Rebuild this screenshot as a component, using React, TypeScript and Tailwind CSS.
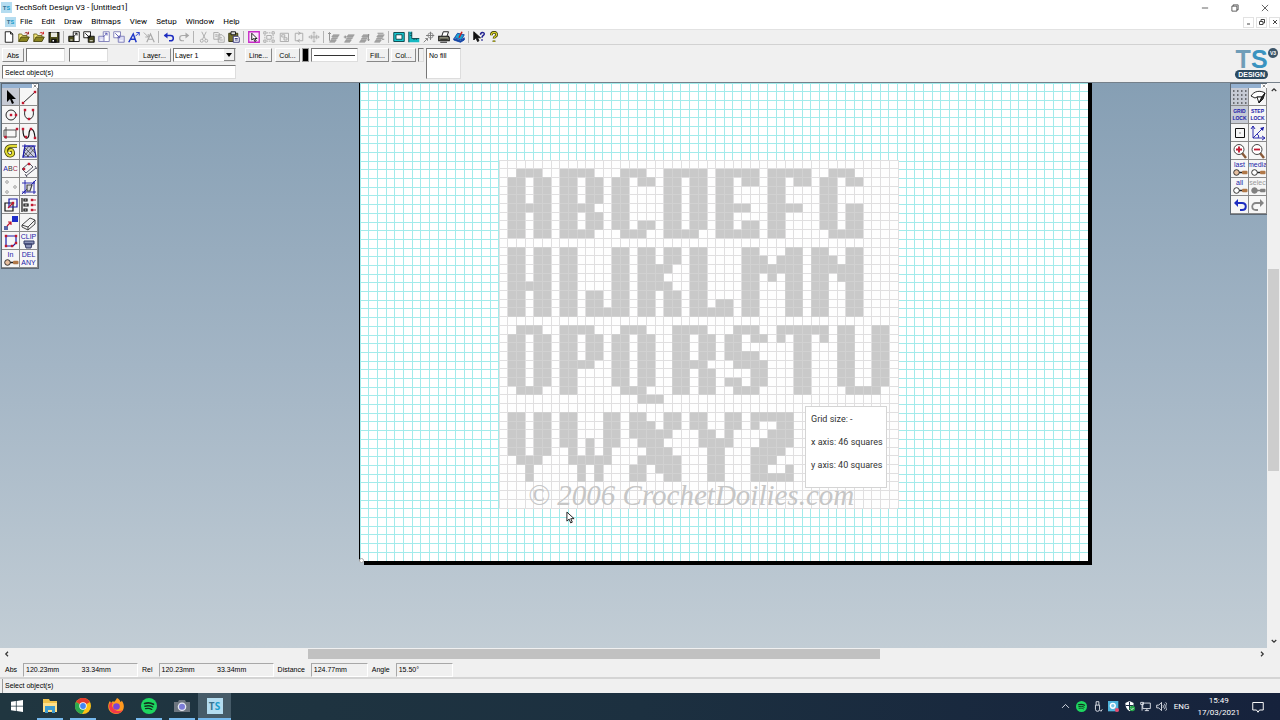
import React from 'react';

const Icon: React.FC<{ size?: string; children: React.ReactNode }> = ({ size = 'w-3 h-3', children }) => (
  <svg viewBox="0 0 16 16" className={`${size} shrink-0`} fill="none" stroke="#111" strokeWidth="1.2">
    {children}
  </svg>
);

type Tool = { label: string; icon: React.ReactNode; active?: boolean };

const NAVY = '#1a1aa8';
const GREY = '#a8a8a8';
const RED = '#c01830';

const dot = (x: number, y: number, fill = RED) => (
  <rect key={`${x}-${y}`} x={x - 1.2} y={y - 1.2} width="2.4" height="2.4" fill={fill} stroke="none" />
);

const folder = (arrow: string) => (
  <Icon>
    <path d="M1 14V4h4l1 2h6v2" fill="#f5e87a" stroke="#6b6420" />
    <path d="M1 14l3-6h11l-3 6z" fill="#8a8420" stroke="#4a4610" />
    <path d="M9 3c2-2 4-1 5 1m0-3v3h-3" stroke={arrow} />
  </Icon>
);

const swapDoc = (disk: boolean, out: boolean) => (
  <Icon>
    <path d={out ? 'M7 1h8v13H7z' : 'M1 1h9v8H1z'} fill="#fff" stroke={disk ? '#111' : '#7d7db8'} />
    <path d={out ? 'M1 7h7v7H1z' : 'M7 7h8v8H7z'} fill={disk ? '#4e4e20' : '#dcdcf4'} stroke={disk ? '#111' : '#7d7db8'} />
    <path d={out ? 'M7 8l5-5m-3 0h3v3' : 'M3 3l6 6m0-3v3H6'} stroke={disk ? '#111' : '#5555b0'} />
    <path d={out ? 'M3 12h3' : 'M9 13h4'} stroke="#fff" />
  </Icon>
);

const layers = (d: string) => (
  <Icon>
    <path d="M7 5h8l-2 3H5zM6 9h7l-2 2H4zM4 12h7l-2 3H2z" fill="#a4a4a4" stroke="#949494" strokeWidth="0.8" />
    <path d={d} stroke="#888" strokeWidth="1.2" />
  </Icon>
);

const toolGroups: Tool[][] = [
  [
    { label: 'New', icon: <Icon><path d="M3 1h7l3 3v11H3zM10 1v3h3" fill="#fff" /></Icon> },
    { label: 'Open', icon: folder('#a02020') },
    { label: 'Insert', icon: folder('#d02020') },
    { label: 'Save', icon: <Icon><path d="M1.500 2h13v13h-13z" fill="#4f4f1c" strokeWidth="1.6" /><path d="M4 2h8v6H4z" fill="#e8e8e0" stroke="none" /><path d="M5 11h6v4H5z" fill="#111" /><path d="M6 12h2v2H6z" fill="#fff" stroke="none" /></Icon> },
  ],
  [
    { label: 'Export drawing', icon: swapDoc(true, true) },
    { label: 'Import drawing', icon: swapDoc(true, false) },
    { label: 'Export bitmap', icon: swapDoc(false, true) },
    { label: 'Import bitmap', icon: swapDoc(false, false) },
    { label: 'Text to front', icon: <Icon><path d="M1 15L7 4l4 11M4 11h6" stroke="#2038c8" strokeWidth="2" /><path d="M10 7l5-5m-4 0h4v4" stroke="#2038c8" /></Icon> },
    { label: 'Text to back', icon: <Icon><path d="M5 15l5-11 5 11M7 11h6" stroke={GREY} strokeWidth="1.6" /><path d="M1 2l6 6m0-4v4H3" stroke={GREY} /></Icon> },
  ],
  [
    { label: 'Undo', icon: <Icon><path d="M2 6h8c5 0 5 7 0 7H8" stroke="#1c2cc0" strokeWidth="2" /><path d="M6 2L1 6l5 4z" fill="#1c2cc0" stroke="none" /></Icon> },
    { label: 'Redo', icon: <Icon><path d="M14 6H6c-5 0-5 7 0 7h2" stroke={GREY} strokeWidth="1.6" /><path d="M10 2l5 4-5 4z" fill={GREY} stroke="none" /></Icon> },
  ],
  [
    { label: 'Cut', icon: <Icon><path d="M5 1l5 10M11 1L6 11" stroke={GREY} /><circle cx="5" cy="13" r="2" stroke={GREY} /><circle cx="11" cy="13" r="2" stroke={GREY} /></Icon> },
    { label: 'Copy', icon: <Icon><path d="M1 2h6l2 2v7H1zM7 5h5l3 3v7H7z" fill="#eee" stroke={GREY} /><path d="M3 5h3M3 7h3M9 9h3M9 12h4" stroke={GREY} /></Icon> },
    { label: 'Paste', icon: <Icon><path d="M1 3h12v11H1z" fill="#77732c" stroke="#33320f" /><path d="M4 1h6v4H4z" fill="#ddd" /><path d="M7 7h6l2 2v6H7z" fill="#fff" stroke="#30307a" /><path d="M9 10h4M9 12h4" stroke="#30307a" /></Icon> },
  ],
  [
    { label: 'Select', icon: <Icon><path d="M1 1h14v14H1z" fill="#fbe6fb" stroke="#c828c8" strokeWidth="1.8" /><path d="M5 3v9l2.500-2 1.500 4 2-1-2-3h3z" fill="#fff" /></Icon> },
    { label: 'Group', icon: <Icon><path d="M1 1h3v3H1zM12 1h3v3h-3zM1 12h3v3H1zM12 12h3v3h-3zM5 6h6v5H5z" stroke={GREY} /><path d="M5 2.500h6M5 13.500h6M2.500 5v6M13.500 5v6" stroke={GREY} strokeDasharray="2 1" /></Icon> },
    { label: 'Ungroup', icon: <Icon><path d="M3 3h11v11H3zM5 5h4v3H5zM8 9h4v3H8z" stroke={GREY} /></Icon> },
    { label: 'Rotate', icon: <Icon><path d="M3 3h10v10H3zM7 1l3 2-3 2M9 11l-3 2 3 2" stroke={GREY} /></Icon> },
    { label: 'Move', icon: <Icon><path d="M8 2v12M2 8h12M6 3l2-2 2 2M6 13l2 2 2-2M3 6L1 8l2 2M13 6l2 2-2 2M5 5v6M11 5v6" stroke={GREY} /></Icon> },
  ],
  [
    { label: 'To front', icon: layers('M2 13V2m-2 2l2-2 2 2') },
    { label: 'Forward', icon: layers('M1 8h4m-2-2v4') },
    { label: 'Backward', icon: layers('M14 4v9m-2-2l2 2 2-2') },
    { label: 'To back', icon: layers('M12 11h3M6 3h8') },
  ],
  [
    { label: 'Page', icon: <Icon><path d="M1 2h14v12H1z" fill="#19c6cf" stroke="#073e44" /><path d="M4 5h8v6H4z" fill="#fff" stroke="#073e44" /></Icon> },
    { label: 'Rulers', icon: <Icon><path d="M1 1h4v9h10v5H1z" fill="#15b9c2" stroke="none" /><path d="M5 1v9h10M1 15V1M3 3h2M3 6h2M8 10v2M11 10v2" stroke="#0a4247" /></Icon> },
    { label: 'Origin', icon: <Icon><circle cx="10" cy="6" r="3.500" stroke="#888" /><path d="M10 1v11M4 6h11M1 15l5-5m-3 0h3v3" stroke="#777" /></Icon> },
    { label: 'Print', icon: <Icon><path d="M5 7l2-6h7l-2 6" fill="#fff" /><path d="M1 7h13l1 2v4H1z" fill="#8b8b78" strokeWidth="1.5" /><path d="M3 11h10M3 15h9" /></Icon> },
    { label: 'Plot', icon: <Icon><path d="M2 9l4-6 9 2-4 7z" fill="#1ba5d5" stroke="#1344a5" /><path d="M1 10l9 3 5-4v3l-5 3-9-3z" fill="#1344a5" stroke="#1344a5" /><path d="M12 1L8 9" stroke="#c82020" strokeWidth="2" /></Icon> },
  ],
  [
    { label: 'Context help', icon: <Icon><path d="M1 1v11l3-3 2 5 2-1-2-4h4z" fill="#111" /><path d="M10 5c0-4 5-4 5-1 0 2-3 2-3 5m0 2v2" stroke="#20208f" strokeWidth="2" /></Icon> },
    { label: 'Help', icon: <Icon><path d="M4.500 5.500c0-5 7-5 7-.5 0 3-3.500 2-3.500 5m0 2.500v2" stroke="#33330a" strokeWidth="3.600" /><path d="M4.500 5.500c0-5 7-5 7-.5 0 3-3.500 2-3.500 5m0 2.500v2" stroke="#d8d327" strokeWidth="1.700" /></Icon> },
  ],
];

const plug = (fill: string, colour: string) => (
  <svg viewBox="0 0 16 7" className="w-4 h-[7px]" stroke={colour}>
    <path d="M7 3.500h3" strokeWidth="1.500" />
    <rect x="10" y="1.700" width="5.500" height="3.600" rx="1" fill={colour === '#222' ? '#b07848' : colour} stroke="none" />
    <circle cx="4.500" cy="3.500" r="2.800" fill={fill} strokeWidth="0.900" />
  </svg>
);

const LockCaption: React.FC<{ word: string }> = ({ word }) => (
  <span className="flex flex-col items-center font-bold text-[5px] leading-[7px] text-[#1a1aa8]">
    <span>{word}</span>
    <span>LOCK</span>
  </span>
);

const PlugCaption: React.FC<{ word: string; fill: string; muted?: boolean }> = ({ word, fill, muted }) => (
  <span className={`flex flex-col items-center text-[7px] leading-[8px] ${muted ? 'text-[#999]' : 'text-[#1a1aa8]'}`}>
    <span>{word}</span>
    {plug(fill, muted ? '#808080' : '#222')}
  </span>
);

const S = 'w-4 h-4';

const drawTools: Tool[] = [
  { label: 'Pointer', active: true, icon: <Icon size={S}><path d="M4 1v12l3-3 2 5 2-1-2-4h4z" fill="#000" stroke="none" /></Icon> },
  { label: 'Line', icon: <Icon size={S}><path d="M2 14L14 3" strokeWidth="0.900" />{dot(2, 14)}{dot(14, 3)}</Icon> },
  { label: 'Circle', icon: <Icon size={S}><circle cx="8" cy="8" r="5" strokeWidth="0.900" />{dot(8, 8)}{dot(13, 8)}</Icon> },
  { label: 'Arc', icon: <Icon size={S}><path d="M4 3c-3 12 11 12 8 0" strokeWidth="0.900" />{dot(4, 3)}{dot(12, 3)}{dot(8, 12)}</Icon> },
  { label: 'Rectangle', icon: <Icon size={S}><path d="M1 5h12v7H1zM3 2v12" stroke="#444" strokeWidth="0.900" />{dot(2.5, 12)}{dot(14, 4)}</Icon> },
  { label: 'Curve', icon: <Icon size={S}><path d="M2 5c0 10 6 10 6 4s5-8 6 4" />{dot(2, 4)}{dot(5, 12)}{dot(10, 4)}{dot(14, 13)}</Icon> },
  { label: 'Contour', icon: <Icon size={S}><path d="M14 3H8C3 3 2 8 4 11s7 2 6-2-4-2-4 0" stroke="#444408" strokeWidth="3.600" /><path d="M14 3H8C3 3 2 8 4 11s7 2 6-2-4-2-4 0" stroke="#e2db34" strokeWidth="2" /></Icon> },
  { label: 'Hatch', icon: <Icon size={S}><path d="M4 3h9l2 11H2z" fill="#c8cbe0" stroke={NAVY} /><path d="M4 5l9 9M3 9l5 5M8 3l6 7M12 3L3 13M13 6l-7 8M8 3L4 8" stroke="#222" strokeWidth="0.600" /><path d="M1 3h14M4 1L2 15" stroke={NAVY} strokeWidth="0.800" /></Icon> },
  { label: 'Text', icon: <span className="text-[7px] leading-none text-[#333]"><span className="text-[#1a1aa8]">A</span>B<span className="text-[#a02848]">C</span></span> },
  { label: 'Dimension', icon: <Icon size={S}><path d="M1 8l7-6 4 4-7 6zM5 15l10-8M4 13l2 3M14 5l2 3" stroke="#445" strokeWidth="0.900" />{dot(3, 8)}{dot(8, 3)}</Icon> },
  { label: 'Points', icon: <Icon size={S}><g stroke="#999" strokeWidth="0.900"><circle cx="4" cy="3" r="1.300" /><circle cx="12" cy="8" r="1.300" /><circle cx="4" cy="13" r="1.300" /></g></Icon> },
  { label: 'Trim', icon: <Icon size={S}><path d="M1 4h13M4 1v14M13 2v13M1 13h14M15 1L1 15" stroke={NAVY} strokeWidth="0.900" /><path d="M6 6h5l-2 6H6z" fill="#ddd" stroke="#444" /></Icon> },
  { label: 'Duplicate', icon: <Icon size={S}><path d="M2 6h8v8H2z" /><path d="M6 2h8v8H6z" stroke={NAVY} /><path d="M5 11l5-5" stroke={RED} />{dot(10, 6)}</Icon> },
  { label: 'Align', icon: <Icon size={S}><path d="M1 1v14M3 2h3v2H3zM3 7h4v2H3zM3 12h3v2H3z" /><path d="M10 3h5M10 8h5M10 13h5" stroke={RED} strokeWidth="0.900" />{dot(11, 3)}{dot(11, 8)}{dot(11, 13)}</Icon> },
  { label: 'Scale', icon: <Icon size={S}><path d="M9 1h6v6H9z" fill="#1c2cc8" stroke="none" /><path d="M1 11h4v4H1z" fill="#5a66a8" stroke="none" /><path d="M4 11l4-4m-3 0h3v3" stroke={RED} /></Icon> },
  { label: 'Erase', icon: <Icon size={S}><path d="M1 10l8-7 5 2v4l-7 6-6-3zM1 10l6 2 7-7M7 12v3" fill="#f2f2f2" stroke="#333" strokeWidth="0.900" /></Icon> },
  { label: 'Edit nodes', icon: <Icon size={S}><path d="M3 3h10v7l-3 3H3z" stroke={NAVY} />{dot(3, 3)}{dot(13, 3)}{dot(13, 10)}{dot(9, 13)}{dot(3, 13)}</Icon> },
  { label: 'Clip', icon: <span className="flex flex-col items-center"><span className="text-[7px] leading-[7px] text-[#1a1aa8]">CLIP</span><svg viewBox="0 0 12 9" className="w-3 h-[9px]"><path d="M1 1h10v3H1zM2 4h7l-1 4H3z" fill="#8c94b8" stroke="#333a66" /></svg></span> },
  { label: 'Plug in', icon: <PlugCaption word="In" fill="#e8c0a0" /> },
  { label: 'Delete any', icon: <span className="flex flex-col items-center text-[7px] leading-[8px] text-[#1a1aa8]"><span>DEL</span><span>ANY</span></span> },
];

const magnifier = (d: string) => (
  <Icon size={S}>
    <path d="M10 10l4 5" stroke="#8a5a38" strokeWidth="2.400" />
    <circle cx="7" cy="6.500" r="5" fill="#fff" stroke="#333" strokeWidth="0.900" />
    <path d={d} stroke={RED} strokeWidth="1.800" />
  </Icon>
);

const viewTools: Tool[] = [
  { label: 'Grid', active: true, icon: <Icon size={S}>{[2, 6, 10, 14].map(y => <path key={y} d={`M1 ${y}h15`} stroke="#111" strokeDasharray="1.500 2.500" />)}</Icon> },
  { label: 'Snap', icon: <Icon size={S}><path d="M1 7c3-5 9-6 14-3l-3 4H7L5 9z" fill="#fff" strokeWidth="0.900" /><path d="M7 8h5l-3 6z" fill="#fff" strokeWidth="0.900" /><path d="M12 8l3-4-2 6-4 4z" fill="#333" strokeWidth="0.900" /></Icon> },
  { label: 'Grid lock', active: true, icon: <LockCaption word="GRID" /> },
  { label: 'Step lock', icon: <LockCaption word="STEP" /> },
  { label: 'Centre', icon: <Icon size={S}><path d="M3.500 3.500h9v9h-9z" strokeWidth="1" /><path d="M7.500 7.500h1v1h-1z" fill="#111" stroke="none" /></Icon> },
  { label: 'Axes', icon: <Icon size={S}><path d="M3 1v12h12M1 4l2-3 2 3M12 11l3 2-3 2M3 13L14 2M7 9c2 1 2 3 1 4" stroke={NAVY} strokeWidth="0.900" /><path d="M10 3l4-1-1 4z" fill={NAVY} stroke="none" /></Icon> },
  { label: 'Zoom in', icon: magnifier('M4 6.500h6M7 3.500v6') },
  { label: 'Zoom out', icon: magnifier('M4 6.500h6') },
  { label: 'Zoom last', icon: <PlugCaption word="last" fill="#e8c0a0" /> },
  { label: 'Zoom media', icon: <PlugCaption word="media" fill="#fff" /> },
  { label: 'Zoom all', icon: <PlugCaption word="all" fill="#fff" /> },
  { label: 'Zoom selection', icon: <PlugCaption word="selec" fill="#808080" muted /> },
  { label: 'Undo view', icon: <Icon size={S}><path d="M4 6h6c5 0 5 7 0 7H8" stroke="#1c2cc0" strokeWidth="2" /><path d="M6 2L2 6l4 4z" fill="#1c2cc0" stroke="none" /></Icon> },
  { label: 'Redo view', icon: <Icon size={S}><path d="M12 6H6c-5 0-5 7 0 7h2" stroke="#858585" strokeWidth="1.800" /><path d="M10 2l4 4-4 4z" fill="#858585" stroke="none" /></Icon> },
];

const Palette: React.FC<{ tools: Tool[]; className: string }> = ({ tools, className }) => (
  <div className={`absolute top-0 border border-[#5c6874] bg-[#8a949c] ${className}`}>
    <div className="h-1 bg-[#93b0d0] flex justify-end">
      <button aria-label="Close palette" className="w-1.5 h-1 bg-white flex items-center justify-center">
        <svg viewBox="0 0 6 6" className="w-1.5 h-1" stroke="#555"><path d="M1 1l4 4M5 1L1 5" /></svg>
      </button>
    </div>
    <div className="grid grid-cols-2">
      {tools.map(tool => (
        <button
          key={tool.label}
          aria-label={tool.label}
          className={`w-[18px] h-[18px] overflow-hidden flex items-center justify-center border-r border-b border-[#8a8a8a] ${tool.active ? 'bg-[#c6cad4]' : 'bg-[#f6f6f6]'}`}
        >
          {tool.icon}
        </button>
      ))}
    </div>
  </div>
);

// Filled squares per chart row, as [first, last] column pairs
const chartRows: Record<number, number[][]> = {
  1: [[2, 4], [7, 10], [14, 16], [19, 23], [25, 29], [31, 35], [38, 40]],
  2: [[1, 2], [4, 5], [7, 8], [10, 11], [13, 14], [16, 17], [19, 20], [22, 23], [25, 26], [28, 29], [31, 32], [34, 35], [37, 38], [40, 41]],
  3: [[1, 2], [4, 5], [7, 8], [10, 11], [13, 14], [19, 20], [22, 23], [25, 26], [31, 32], [37, 38]],
  4: [[1, 2], [4, 5], [7, 8], [10, 11], [13, 14], [19, 20], [22, 23], [25, 26], [31, 32], [37, 38]],
  5: [[1, 5], [7, 10], [13, 14], [19, 20], [22, 23], [25, 28], [31, 34], [37, 38], [40, 41]],
  6: [[1, 2], [4, 5], [7, 8], [10, 11], [13, 14], [19, 20], [22, 23], [25, 26], [31, 32], [37, 38], [40, 41]],
  7: [[1, 2], [4, 5], [7, 8], [10, 11], [13, 14], [16, 17], [19, 20], [22, 23], [25, 26], [28, 29], [31, 32], [37, 38], [40, 41]],
  8: [[1, 2], [4, 5], [7, 10], [14, 16], [19, 22], [25, 29], [31, 32], [38, 41]],
  10: [[1, 2], [4, 5], [7, 8], [13, 14], [16, 17], [19, 20], [22, 23], [28, 29], [33, 34], [36, 37], [40, 41]],
  11: [[1, 2], [4, 5], [7, 8], [13, 14], [16, 17], [19, 20], [22, 23], [28, 30], [32, 34], [36, 38], [40, 41]],
  12: [[1, 2], [4, 5], [7, 8], [13, 14], [16, 19], [22, 23], [28, 34], [36, 41]],
  13: [[1, 2], [4, 5], [7, 8], [13, 14], [16, 18], [22, 23], [28, 29], [31, 31], [33, 34], [36, 37], [39, 41]],
  14: [[1, 5], [7, 8], [13, 14], [16, 19], [22, 23], [28, 29], [33, 34], [36, 37], [40, 41]],
  15: [[1, 2], [4, 5], [7, 8], [10, 11], [13, 14], [16, 17], [19, 20], [22, 23], [28, 29], [33, 34], [36, 37], [40, 41]],
  16: [[1, 2], [4, 5], [7, 8], [10, 11], [13, 14], [16, 17], [19, 20], [22, 23], [25, 26], [28, 29], [33, 34], [36, 37], [40, 41]],
  17: [[1, 2], [4, 5], [7, 8], [10, 14], [16, 17], [19, 20], [22, 26], [28, 29], [33, 34], [36, 37], [40, 41]],
  19: [[2, 4], [7, 10], [14, 16], [20, 23], [27, 29], [32, 37], [39, 40], [43, 44]],
  20: [[1, 2], [4, 5], [7, 8], [10, 11], [13, 14], [16, 17], [20, 21], [23, 24], [26, 27], [29, 30], [32, 32], [34, 35], [37, 37], [39, 40], [43, 44]],
  21: [[1, 2], [4, 5], [7, 8], [10, 11], [13, 14], [16, 17], [20, 21], [23, 24], [26, 27], [34, 35], [39, 40], [43, 44]],
  22: [[1, 2], [4, 5], [7, 8], [10, 11], [13, 14], [16, 17], [20, 21], [23, 24], [26, 29], [34, 35], [39, 40], [43, 44]],
  23: [[1, 2], [4, 5], [7, 10], [13, 14], [16, 17], [20, 23], [27, 30], [34, 35], [39, 40], [43, 44]],
  24: [[1, 2], [4, 5], [7, 8], [13, 14], [16, 17], [20, 21], [23, 24], [29, 30], [34, 35], [39, 40], [43, 44]],
  25: [[1, 2], [4, 5], [7, 8], [13, 14], [16, 17], [20, 21], [23, 24], [26, 27], [29, 30], [34, 35], [39, 40], [43, 44]],
  26: [[2, 4], [7, 8], [14, 16], [20, 21], [23, 24], [27, 29], [34, 35], [40, 43]],
  27: [[16, 18]],
  29: [[1, 2], [4, 5], [7, 8], [12, 13], [15, 16], [19, 20], [22, 23], [26, 27], [29, 33]],
  30: [[1, 2], [4, 5], [7, 8], [12, 13], [15, 17], [19, 20], [22, 23], [26, 27], [29, 29], [32, 33]],
  31: [[1, 2], [4, 5], [7, 8], [12, 13], [15, 19], [23, 24], [26, 26], [31, 33]],
  32: [[1, 2], [4, 5], [7, 8], [10, 10], [12, 13], [16, 18], [23, 26], [30, 33]],
  33: [[1, 2], [4, 5], [8, 8], [10, 10], [12, 12], [17, 19], [24, 25], [29, 32]],
  34: [[2, 4], [8, 12], [16, 20], [24, 25], [29, 31]],
  35: [[3, 3], [9, 9], [11, 11], [15, 16], [18, 20], [24, 25], [29, 30], [33, 33]],
  36: [[3, 3], [9, 9], [11, 11], [15, 16], [19, 20], [24, 25], [29, 33]],
};

const gridPath = (cols: number, rows: number) =>
  Array.from({ length: cols + 1 }, (_, i) => `M${i} 0V${rows}`).join('') +
  Array.from({ length: rows + 1 }, (_, i) => `M0 ${i}H${cols}`).join('');

const cellPath = Object.entries(chartRows)
  .flatMap(([row, runs]) => runs.map(([a, b]) => `M${a} ${row}H${b + 1}v1H${a}z`))
  .join('');

const Chart: React.FC = () => (
  <div className="absolute left-[139px] top-[77px] w-[399px] h-[348px] bg-[#fefefe]">
    <svg viewBox="0 0 46 40" preserveAspectRatio="none" shapeRendering="crispEdges" className="block w-full h-full overflow-visible">
      <path d={gridPath(46, 40)} stroke="#e2dfe2" strokeWidth="1" vectorEffect="non-scaling-stroke" fill="none" />
      <path d={cellPath} fill="#c9c9c9" />
      <path d={gridPath(46, 40)} stroke="#dedede" strokeWidth="1" strokeOpacity="0.4" vectorEffect="non-scaling-stroke" fill="none" />
    </svg>
    <p className="absolute left-[29px] bottom-[-3px] font-['Liberation_Serif',serif] italic text-[29px] leading-8 text-[#c6c6c6] whitespace-nowrap">
      © 2006 CrochetDoilies.com
    </p>
    <div className="absolute left-[306px] top-[246px] w-[82px] h-[82px] pl-[5px] pt-1 bg-white border border-[#d4d4d4] font-[Roboto,sans-serif] text-[9px] text-[#333] whitespace-nowrap flex flex-col">
      <span className="h-[23px] leading-4">Grid size: -</span>
      <span className="h-[23px] leading-4">x axis: 46 squares</span>
      <span className="h-[23px] leading-4">y axis: 40 squares</span>
    </div>
  </div>
);

const Bevel: React.FC<{ label: string; className?: string }> = ({ label, className = '' }) => (
  <button className={`h-[14px] bg-[#f0f0f0] border border-t-white border-l-white border-b-[#888] border-r-[#888] flex items-center justify-center ${className}`}>
    {label}
  </button>
);

const Field: React.FC<{ label: string; values: string[]; className: string }> = ({ label, values, className }) => (
  <div className="flex items-center gap-1.5">
    <span>{label}</span>
    <output aria-label={label} className={`h-[14px] flex items-center pl-0.5 border border-t-[#a8a8a8] border-l-[#a8a8a8] border-b-white border-r-white ${className}`}>
      {values.map(value => <span key={value} className="w-[57px]">{value}</span>)}
    </output>
  </div>
);

const TsBadge: React.FC<{ className: string }> = ({ className }) => (
  <span className={`bg-[#b4dcf0] text-[#39718f] font-bold flex items-center justify-center leading-none ${className}`}>
    T<span className="text-[#1b9ccc]">S</span>
  </span>
);

const Spotify: React.FC<{ className: string }> = ({ className }) => (
  <svg viewBox="0 0 16 16" className={className} fill="none" stroke="#12301f" strokeLinecap="round">
    <circle cx="8" cy="8" r="8" fill="#1ed760" stroke="none" />
    <path d="M3.500 5.500c3-1 6.500-.7 9 .8" strokeWidth="1.600" />
    <path d="M4 8.200c3-.8 5.500-.5 7.800.8" strokeWidth="1.400" />
    <path d="M4.500 10.700c2.300-.6 4.500-.4 6.300.7" strokeWidth="1.200" />
  </svg>
);

const taskbarApps = [
  { label: 'Start', line: '', icon: <svg viewBox="0 0 16 16" className="w-3 h-3" fill="#fff"><path d="M0 2.300l6.500-.9v6.100H0zM7.500 1.200L16 0v7.500H7.500zM0 8.500h6.500v6.100L0 13.700zM7.500 8.500H16V16l-8.500-1.200z" /></svg> },
  { label: 'File Explorer', line: 'w-[26px]', icon: <svg viewBox="0 0 16 16" className="w-4 h-4"><path d="M1 1h6l1 2h7v11H1z" fill="#f0c24c" /><path d="M1 5h14v9H1z" fill="#ffe08a" /><path d="M3 8h10v7h-3v-3H6v3H3z" fill="#3e9bd0" /></svg> },
  { label: 'Chrome', line: 'w-[26px]', icon: <svg viewBox="0 0 16 16" className="w-4 h-4"><circle cx="8" cy="8" r="8" fill="#fbc116" /><path d="M8 8L1 4a8 8 0 0114 0z" fill="#e33b2e" /><path d="M8 8L1 4a8 8 0 006 12l4-6.500z" fill="#2da94f" /><circle cx="8" cy="8" r="3.700" fill="#fff" /><circle cx="8" cy="8" r="2.900" fill="#4286f5" /></svg> },
  { label: 'Firefox', line: '', icon: <svg viewBox="0 0 16 16" className="w-4 h-4"><path d="M9 0c2 1 3 2 3.500 4 1-.2 1-1 1-1.500C16 5 16.500 9 15 12c-3 5.500-11 5-14 0C-.5 9 .3 5 2 3l1 2 2-2 1 1c1-1 2-2 3-4z" fill="#ff9a1f" /><path d="M1 8c0 8 10 10 14 4-4 2-7 1-9-1S3 7 5 5C3 4 1 5 1 8z" fill="#f4384a" /><circle cx="8.500" cy="8.500" r="3.300" fill="#7a45d8" /></svg> },
  { label: 'Spotify', line: 'w-[26px]', icon: <Spotify className="w-4 h-4" /> },
  { label: 'Camera', line: 'w-[26px]', icon: <svg viewBox="0 0 16 16" className="w-4 h-4"><path d="M0 4h4l1-2h6l1 2h4v10H0z" fill="#6d7680" /><circle cx="8" cy="8.700" r="4.300" fill="#e6e9f2" /><circle cx="8" cy="8.700" r="3" fill="#7b7bd6" /></svg> },
  { label: 'TechSoft Design', line: 'w-full', icon: <TsBadge className="w-4 h-4 text-[10px]" /> },
];

const trayIcons = [
  { label: 'Show hidden icons', icon: <path d="M3 10l5-5 5 5" /> },
  { label: 'Spotify', icon: null },
  { label: 'USB', icon: <path d="M5 6h6v6a3 3 0 01-6 0zM6 6V1h4v5M11 13l2 2 2-3" /> },
  { label: 'Recorder', icon: <g stroke="none"><rect width="15" height="15" fill="#4fb4dc" /><circle cx="7" cy="7" r="4.500" fill="#fff" /><circle cx="7" cy="7" r="2.500" fill="#7cc6e6" /><circle cx="13" cy="13" r="3" fill="#e8486c" /></g> },
  { label: 'Security', icon: <g stroke="none"><path d="M8 0l6 3c0 6-2 9-6 12C4 12 2 9 2 3z" fill="#fff" /><path d="M8 1v12M2.500 6.500h11" stroke="#1b2940" strokeWidth="1.500" /><circle cx="12" cy="11" r="4" fill="#25a849" /><path d="M10 11l1.500 1.500L14 10" stroke="#fff" /></g> },
  { label: 'Network', icon: <path d="M4 3h11v8H4zM7 14h6M10 11v3M1 2h4v3H1zM3 5v9" /> },
  { label: 'Volume', icon: <path d="M1 6h3l4-4v12l-4-4H1zM10 6c1 1 1 3 0 4M12 4c2 2 2 6 0 8M14 2c3 3 3 9 0 12" /> },
];

const App: React.FC = () => (
  <div className="h-screen min-h-[400px] flex flex-col overflow-hidden bg-[#f0f0f0] text-black font-['Liberation_Sans',Arial,sans-serif] text-[7px] leading-none">
    {/* Title bar */}
    <header className="h-[15px] shrink-0 bg-white flex items-center font-[Roboto,sans-serif] text-[8px]">
      <TsBadge className="w-[11px] h-[11px] ml-px mr-[3px] text-[6px]" />
      <h1 className="flex-1">TechSoft Design V3 - [Untitled1]</h1>
      <div className="flex">
        {[['Minimise', 'M3 8h10'], ['Restore', 'M3 5h8v8H3zM5 5V3h8v8h-2'], ['Close', 'M3 3l10 10M13 3L3 13']].map(([label, d]) => (
          <button key={label} aria-label={label} className="w-[30px] h-[15px] flex items-center justify-center">
            <svg viewBox="0 0 16 16" className="w-[10px] h-[10px]" stroke="#333" strokeWidth="1.200" fill="none"><path d={d} /></svg>
          </button>
        ))}
      </div>
    </header>

    {/* Menu bar */}
    <nav className="h-[14px] shrink-0 bg-white flex items-center font-[Roboto,sans-serif] text-[8px]">
      <TsBadge className="w-[11px] h-[10px] ml-[5px] mr-1 text-[6px]" />
      <div className="flex-1 flex gap-[9px]">
        {['File', 'Edit', 'Draw', 'Bitmaps', 'View', 'Setup', 'Window', 'Help'].map(item => (
          <button key={item}>{item}</button>
        ))}
      </div>
      <div className="flex gap-0.5">
        {[['Minimise drawing', 'M4 12h6'], ['Restore drawing', 'M3 7h7v6H3zM6 7V3h7v7h-3'], ['Close drawing', 'M4 4l8 8M12 4l-8 8']].map(([label, d]) => (
          <button key={label} aria-label={label} className="w-[11px] h-[11px] border border-[#e2e2e2] flex items-center justify-center">
            <svg viewBox="0 0 16 16" className="w-2 h-2" stroke="#444" strokeWidth="2" fill="none"><path d={d} /></svg>
          </button>
        ))}
      </div>
    </nav>

    {/* Standard toolbar */}
    <div className="h-4 shrink-0 pl-px flex items-center border-t border-b border-t-[#e2e2e2] border-b-[#d2d2d2]">
      {toolGroups.map((group, i) => (
        <div key={i} className="flex items-center">
          {i > 0 && <span className="w-px h-3 mx-0.5 bg-[#b4b4b4]" />}
          {group.map(tool => (
            <button key={tool.label} aria-label={tool.label} className="w-[15px] h-[14px] flex items-center justify-center">
              {tool.icon}
            </button>
          ))}
        </div>
      ))}
    </div>

    {/* Property bar */}
    <div className="h-[38px] shrink-0 flex items-start pt-[3px] border-b border-[#75808a]">
      <div className="w-[234px] ml-0.5 flex flex-col gap-[3px]">
        <div className="flex items-center">
          <Bevel label="Abs" className="w-[22px]" />
          <input aria-label="X position" className="w-[39px] h-[14px] ml-0.5 bg-white border border-t-[#777] border-l-[#777] border-[#ddd]" />
          <input aria-label="Y position" className="w-[39px] h-[14px] ml-1 bg-white border border-t-[#777] border-l-[#777] border-[#ddd]" />
          <Bevel label="Layer..." className="w-[33px] ml-auto" />
          <div className="relative w-[63px] ml-0.5">
            <select aria-label="Layer" className="appearance-none block w-full h-[14px] pl-px bg-white border border-t-[#777] border-l-[#777] border-[#ddd]">
              <option>Layer 1</option>
            </select>
            <span className="pointer-events-none absolute right-px top-px w-[11px] h-3 bg-[#f0f0f0] border-r border-b border-[#888] flex items-center justify-center">
              <svg viewBox="0 0 6 4" className="w-[6px] h-1"><path d="M0 0h6L3 4z" /></svg>
            </span>
          </div>
        </div>
        <p className="h-[14px] flex items-center pl-[2px] bg-white border border-t-[#777] border-l-[#777] border-[#ddd]">Select object(s)</p>
      </div>
      <div className="flex items-start ml-[9px]">
        <Bevel label="Line..." className="w-[27px]" />
        <Bevel label="Col..." className="w-[25px] ml-[3px]" />
        <span className="w-[7px] h-[14px] ml-0.5 bg-black border border-[#999]" />
        <span className="w-[47px] h-[14px] ml-0.5 px-0.5 bg-white border border-t-[#777] border-l-[#777] border-[#ddd] flex items-center">
          <span className="w-full h-px bg-[#333]" />
        </span>
        <Bevel label="Fill..." className="w-[23px] ml-2" />
        <Bevel label="Col..." className="w-[25px] ml-0.5" />
        <span className="w-[6px] h-[14px] ml-0.5 border border-t-[#777] border-l-[#777] border-[#ddd]" />
        <span className="w-[35px] h-[31px] ml-0.5 pl-0.5 pt-[3px] bg-white border border-t-[#777] border-l-[#777] border-[#ddd]">No fill</span>
      </div>
      <div className="ml-auto mr-0.5 flex items-start">
        <div className="flex flex-col items-center">
          <span className="h-[22px] text-[25px] leading-[22px] font-bold text-[#6f9db8]">T<span className="text-[#3a93c0]">S</span></span>
          <span className="h-[9px] px-[3px] rounded-full bg-[#2b4a60] text-white text-[7px] leading-[9px] font-bold">DESIGN</span>
        </div>
        <span className="w-[10px] h-[10px] rounded-full bg-[#3b5468] text-white text-[5px] leading-[10px] font-bold text-center">V3</span>
      </div>
    </div>

    {/* Drawing area */}
    <div className="flex-1 min-h-0 flex">
      <main className="relative flex-1 overflow-hidden bg-linear-to-b from-[#869fb4] via-[#a3b5c5] to-[#c2cdd5]">
        <div className="absolute left-[359px] top-0 w-[729px] h-[478px] bg-white border-l border-black">
          <span className="absolute -right-1 top-0 -bottom-1 w-1 bg-black" />
          <span className="absolute left-1 -right-1 -bottom-1 h-1 bg-black" />
          <svg viewBox="0 0 84 55" preserveAspectRatio="none" shapeRendering="crispEdges" className="block w-full h-full">
            <path d={gridPath(84, 55)} stroke="#a2ebeb" strokeWidth="1" vectorEffect="non-scaling-stroke" fill="none" />
          </svg>
          <Chart />
          <span className="absolute -left-px -bottom-0.5 w-[5px] h-[5px] rounded-full border border-[#aaa] bg-white" />
        </div>
        <Palette tools={drawTools} className="left-px" />
        <Palette tools={viewTools} className="-right-px" />
        <svg viewBox="0 0 10 14" className="absolute left-[566px] top-[428px] w-[9px] h-[13px]" fill="#fff" stroke="#111">
          <path d="M1 1v10l2.500-2.200L5.200 13l1.800-.8L5.300 8.300H9z" />
        </svg>
      </main>
      <div className="w-[13px] shrink-0 flex flex-col items-center py-1 bg-[#f0f0f0]">
        <svg viewBox="0 0 8 6" className="w-[6px] h-[5px]" fill="none" stroke="#333" strokeWidth="1.600"><path d="M1 5l3-3 3 3" /></svg>
        <div className="flex-1 w-full flex flex-col px-px">
          <span className="grow-[177]" />
          <span className="grow-[202] bg-[#cdcdcd]" />
          <span className="grow-[168]" />
        </div>
        <svg viewBox="0 0 8 6" className="w-[6px] h-[5px]" fill="none" stroke="#333" strokeWidth="1.600"><path d="M1 1l3 3 3-3" /></svg>
      </div>
    </div>
    <div className="h-3 shrink-0 flex items-center pl-1 pr-[15px]">
      <svg viewBox="0 0 6 8" className="w-[5px] h-[6px]" fill="none" stroke="#333" strokeWidth="1.600"><path d="M5 1L2 4l3 3" /></svg>
      <div className="flex-1 flex h-[10px]">
        <span className="grow-[299]" />
        <span className="grow-[572] bg-[#c1c1c1]" />
        <span className="grow-[380]" />
      </div>
      <svg viewBox="0 0 6 8" className="w-[5px] h-[6px]" fill="none" stroke="#333" strokeWidth="1.600"><path d="M1 1l3 3-3 3" /></svg>
    </div>

    {/* Coordinates */}
    <div className="h-[19px] shrink-0 flex items-center gap-1 pl-[5px] pt-0.5 border-b-2 border-[#d4d4d4]">
      <Field label="Abs" values={['120.23mm', '33.34mm']} className="w-[115px]" />
      <Field label="Rel" values={['120.23mm', '33.34mm']} className="w-[115px]" />
      <Field label="Distance" values={['124.77mm']} className="w-[57px]" />
      <Field label="Angle" values={['15.50°']} className="w-[57px]" />
    </div>
    <p className="h-[14px] shrink-0 ml-0.5 pl-[2px] pb-0.5 flex items-center border-l border-[#999]">Select object(s)</p>

    {/* Taskbar */}
    <footer className="h-[27px] shrink-0 flex items-stretch bg-linear-to-r from-[#203640] via-[#1c3040] to-[#16223c] text-white font-['Open_Sans',sans-serif] text-[8px]">
      {taskbarApps.map(app => (
        <button key={app.label} aria-label={app.label} className={`w-[33px] flex flex-col items-center ${app.line === 'w-full' ? 'bg-[#465b68]' : ''}`}>
          <span className="flex-1 flex items-center">{app.icon}</span>
          <span className={`h-0.5 bg-[#76b9ed] ${app.line}`} />
        </button>
      ))}
      <div className="ml-auto flex items-center">
        {trayIcons.map(item => (
          <button key={item.label} aria-label={item.label} className="w-4 flex justify-center">
            {item.icon
              ? <svg viewBox="0 0 16 16" className="w-[11px] h-[11px]" fill="none" stroke="#e6eaf0" strokeWidth="1.300">{item.icon}</svg>
              : <Spotify className="w-[11px] h-[11px]" />}
          </button>
        ))}
        <span className="ml-1 font-[Roboto,sans-serif]">ENG</span>
        <time className="ml-2 text-center font-[Roboto,sans-serif] leading-3">15:49<br />17/03/2021</time>
        <button aria-label="Notifications" className="ml-3 mr-4">
          <svg viewBox="0 0 16 16" className="w-3 h-3" fill="none" stroke="#fff" strokeWidth="1.300"><path d="M1 2h14v10h-5l-2 3-2-3H1z" /></svg>
        </button>
      </div>
    </footer>
  </div>
);

export default App;
